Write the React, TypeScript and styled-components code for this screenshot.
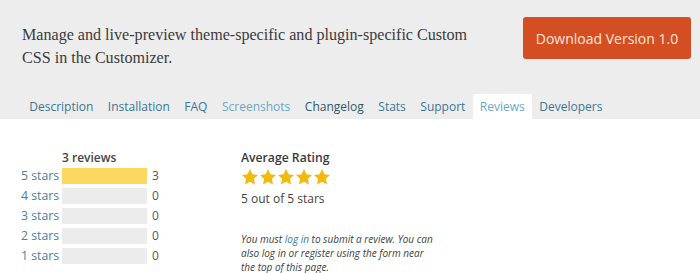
import React from 'react';
import styled, { createGlobalStyle } from 'styled-components';

const GlobalStyle = createGlobalStyle`
  html, body {
    margin: 0;
    padding: 0;
    background: #ffffff;
  }
  body {
    font-family: 'Open Sans', 'Liberation Sans', sans-serif;
    color: #333;
  }
`;

const Page = styled.div`
  width: 700px;
`;

const Header = styled.header`
  background: #ededed;
  padding: 17px 9px 0 22px;
`;

const HeaderTop = styled.div`
  display: flex;
  justify-content: space-between;
  align-items: flex-start;
`;

const Lead = styled.p`
  margin: 6px 0 0;
  width: 480px;
  font-family: 'Liberation Serif', 'Times New Roman', serif;
  font-size: 16.1px;
  line-height: 23px;
  color: #3b3b3b;
`;

const DownloadButton = styled.a`
  display: flex;
  align-items: center;
  justify-content: center;
  width: 168px;
  height: 42px;
  border-radius: 3px;
  background: #d54e21;
  color: #fbe6dd;
  font-size: 14px;
  text-decoration: none;
`;

const Tabs = styled.nav`
  display: flex;
  margin-top: 25px;
`;

const Tab = styled.a<{ $active?: boolean; $tone: 'link' | 'visited' | 'dark' }>`
  display: block;
  padding: 0 7.25px;
  height: 25px;
  line-height: 25px;
  font-size: 12px;
  border-radius: 2px 2px 0 0;
  text-decoration: none;
  background: ${(p) => (p.$active ? '#ffffff' : 'transparent')};
  color: ${(p) =>
    p.$tone === 'visited' ? '#6ea6c4' : p.$tone === 'dark' ? '#34576b' : '#3d7596'};
`;

const Content = styled.section`
  display: flex;
  padding: 32px 0 0 21px;
`;

const Summary = styled.div`
  display: grid;
  grid-template-columns: 36px 85px auto;
  column-gap: 5px;
  row-gap: 4px;
  align-items: center;
  align-content: start;
  width: 220px;
`;

const SummaryTitle = styled.div`
  grid-column: 2 / 4;
  font-size: 12px;
  font-weight: 600;
  color: #444;
  line-height: 13px;
`;

const StarLabel = styled.a`
  font-size: 12.3px;
  color: #4a7fa0;
  text-align: right;
  white-space: nowrap;
  line-height: 16px;
  text-decoration: none;
`;

const Bar = styled.div`
  height: 16px;
  background: #ececec;
`;

const BarFill = styled.div`
  height: 100%;
  background: #fcd95e;
`;

const Count = styled.span`
  font-size: 12px;
  color: #555;
  line-height: 16px;
`;

const Rating = styled.div`
  display: flex;
  flex-direction: column;
  width: 194px;
`;

const RatingTitle = styled.div`
  font-size: 12.2px;
  font-weight: 600;
  color: #3a3a3a;
  line-height: 14px;
`;

const Stars = styled.div`
  display: flex;
  margin-top: 3px;
`;

const RatingText = styled.div`
  font-size: 12px;
  color: #444;
  margin-top: 5px;
  line-height: 16px;
`;

const Notice = styled.p`
  margin: 25px 0 0;
  font-size: 10px;
  font-style: italic;
  line-height: 14px;
  color: #3e3e3e;

  a {
    color: #2e7ca0;
    text-decoration: none;
  }
`;

const Star = () => (
  <svg width="18" height="18" viewBox="0 0 20 20">
    <path
      fill="#f2b90f"
      d="M10 1.2l2.7 5.7 6.2.8-4.5 4.3 1.1 6.2L10 15.2l-5.5 3 1.1-6.2L1.1 7.7l6.2-.8z"
    />
  </svg>
);

const tabs: { label: string; tone: 'link' | 'visited' | 'dark'; active?: boolean }[] = [
  { label: 'Description', tone: 'link' },
  { label: 'Installation', tone: 'link' },
  { label: 'FAQ', tone: 'link' },
  { label: 'Screenshots', tone: 'visited' },
  { label: 'Changelog', tone: 'dark' },
  { label: 'Stats', tone: 'link' },
  { label: 'Support', tone: 'link' },
  { label: 'Reviews', tone: 'visited', active: true },
  { label: 'Developers', tone: 'link' },
];

const counts = [
  { stars: 5, count: 3 },
  { stars: 4, count: 0 },
  { stars: 3, count: 0 },
  { stars: 2, count: 0 },
  { stars: 1, count: 0 },
];

const total = 3;

export default function App() {
  return (
    <Page>
      <GlobalStyle />
      <Header>
        <HeaderTop>
          <Lead>
            Manage and live-preview theme-specific and plugin-specific Custom
            <br />
            CSS in the Customizer.
          </Lead>
          <DownloadButton href="#">Download Version 1.0</DownloadButton>
        </HeaderTop>
        <Tabs>
          {tabs.map((t) => (
            <Tab key={t.label} href="#" $tone={t.tone} $active={t.active}>
              {t.label}
            </Tab>
          ))}
        </Tabs>
      </Header>
      <Content>
        <Summary>
          <SummaryTitle>3 reviews</SummaryTitle>
          {counts.map((c) => (
            <React.Fragment key={c.stars}>
              <StarLabel href="#">{c.stars} stars</StarLabel>
              <Bar>
                <BarFill style={{ width: `${(c.count / total) * 100}%` }} />
              </Bar>
              <Count>{c.count}</Count>
            </React.Fragment>
          ))}
        </Summary>
        <Rating>
          <RatingTitle>Average Rating</RatingTitle>
          <Stars>
            <Star />
            <Star />
            <Star />
            <Star />
            <Star />
          </Stars>
          <RatingText>5 out of 5 stars</RatingText>
          <Notice>
            You must <a href="#">log in</a> to submit a review. You can also log in or
            register using the form near the top of this page.
          </Notice>
        </Rating>
      </Content>
    </Page>
  );
}
